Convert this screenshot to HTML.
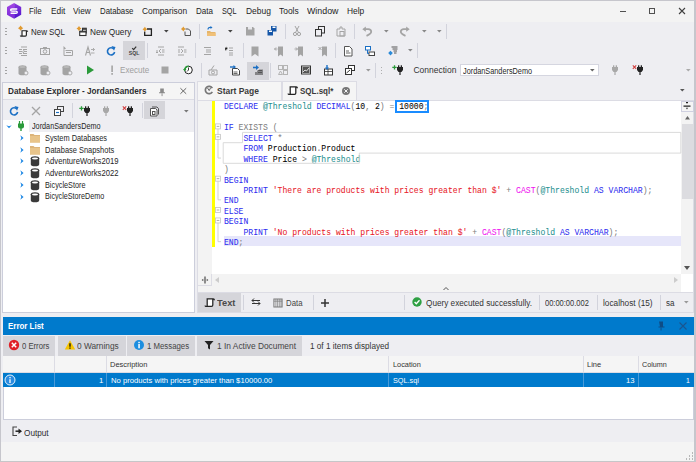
<!DOCTYPE html>
<html><head><meta charset="utf-8">
<style>
*{margin:0;padding:0;box-sizing:border-box}
html,body{width:696px;height:462px;overflow:hidden;background:#eeeef2;font-family:"Liberation Sans",sans-serif;font-size:8.5px;color:#1e1e1e}
.a{position:absolute}
.t{position:absolute;white-space:nowrap;line-height:10px;transform-origin:0 50%}
svg{position:absolute;overflow:visible}
.code{position:absolute;font-family:"Liberation Mono",monospace;font-size:8.8px;line-height:10.45px;white-space:pre;color:#000;transform:scaleX(0.922);transform-origin:0 0;-webkit-text-stroke:0.05px}
.k{color:#2e2ef0}.v{color:#1e9090}.s{color:#e8202a}.f{color:#f010f0}.g{color:#808080}
</style></head><body>

<div class="a" style="left:0px;top:0px;width:696px;height:462px;background:transparent;border:1px solid #c6c6cc;border-right-width:2px;border-bottom:none"></div>
<div class="a" style="left:0px;top:460.7px;width:696px;height:1.3px;background:#c6c6c8;"></div>
<div class="a" style="left:1px;top:1px;width:693px;height:21px;background:#f3f3f3;"></div>
<svg style="left:6.8px;top:2.9px" width="14.2" height="15.8" viewBox="0 0 14.2 15.8">
<defs><linearGradient id="lgL" x1="0" y1="0" x2="0" y2="1"><stop offset="0" stop-color="#a448e4"/><stop offset="1" stop-color="#7a28d8"/></linearGradient>
<linearGradient id="lgR" x1="0" y1="0" x2="0" y2="1"><stop offset="0" stop-color="#8a36dc"/><stop offset="1" stop-color="#4a10cc"/></linearGradient></defs>
<polygon points="7.1,0 14.2,4 14.2,11.8 7.1,15.8 7.1,0" fill="url(#lgR)"/>
<polygon points="7.1,0 0,4 0,11.8 7.1,15.8" fill="url(#lgL)"/>
<path d="M10.3,6 H5 Q3.6,6 3.6,7.1 Q3.6,8.2 5,8.2 H9 Q10.3,8.2 10.3,9.25 Q10.3,10.3 9,10.3 H3.6" stroke="#fff" stroke-width="1.35" fill="none"/>
</svg>
<div class="t" style="left:29.10px;top:6.29px;font-size:8.7px;color:#1e1e1e;transform:scaleX(0.913);">File</div>
<div class="t" style="left:50.60px;top:6.29px;font-size:8.7px;color:#1e1e1e;transform:scaleX(0.954);">Edit</div>
<div class="t" style="left:73.40px;top:6.29px;font-size:8.7px;color:#1e1e1e;transform:scaleX(0.947);">View</div>
<div class="t" style="left:100.30px;top:6.29px;font-size:8.7px;color:#1e1e1e;transform:scaleX(0.900);">Database</div>
<div class="t" style="left:142.40px;top:6.29px;font-size:8.7px;color:#1e1e1e;transform:scaleX(0.962);">Comparison</div>
<div class="t" style="left:196.30px;top:6.29px;font-size:8.7px;color:#1e1e1e;transform:scaleX(0.925);">Data</div>
<div class="t" style="left:222.20px;top:6.29px;font-size:8.7px;color:#1e1e1e;transform:scaleX(0.839);">SQL</div>
<div class="t" style="left:245.60px;top:6.29px;font-size:8.7px;color:#1e1e1e;transform:scaleX(0.975);">Debug</div>
<div class="t" style="left:279.30px;top:6.29px;font-size:8.7px;color:#1e1e1e;transform:scaleX(0.970);">Tools</div>
<div class="t" style="left:307.20px;top:6.29px;font-size:8.7px;color:#1e1e1e;transform:scaleX(1.018);">Window</div>
<div class="t" style="left:347.40px;top:6.29px;font-size:8.7px;color:#1e1e1e;transform:scaleX(0.967);">Help</div>
<div class="a" style="left:620px;top:11px;width:6.2px;height:1.1px;background:#505050;"></div>
<div class="a" style="left:649px;top:8px;width:6.2px;height:6.2px;background:transparent;border:1.1px solid #505050"></div>
<svg style="left:678.5px;top:8.2px" width="6" height="6"><path d="M0,0 L6,6 M6,0 L0,6" stroke="#404040" stroke-width="1.1"/></svg>
<div class="a" style="left:5.4px;top:27.6px;width:1.2px;height:1.2px;background:#999;border-radius:0.6px"></div>
<div class="a" style="left:5.4px;top:30.6px;width:1.2px;height:1.2px;background:#999;border-radius:0.6px"></div>
<div class="a" style="left:5.4px;top:33.6px;width:1.2px;height:1.2px;background:#999;border-radius:0.6px"></div>
<svg style="left:18.00px;top:26.00px" width="10" height="10" viewBox="0 0 10 10"><g transform="translate(2.3,3.6) scale(0.78)"><rect x="2.2" y="1.5" width="5.6" height="6.8" fill="#fff"/><path d="M2.2,8.3 V1.5 H8.2 Q9.4,1.5 9.4,2.9 M7.8,1.5 V7 Q7.8,8.3 6.5,8.3 H0.6 Q0.2,8.3 0.2,7.6" stroke="#222" stroke-width="1.5" fill="none"/></g><polygon points="5.20,2.20 3.74,3.34 2.60,4.80 1.46,3.34 0.00,2.20 1.46,1.06 2.60,-0.40 3.74,1.06" fill="#e09a30"/></svg>
<div class="t" style="left:31.10px;top:26.55px;font-size:8.5px;color:#1e1e1e;transform:scaleX(0.932);">New SQL</div>
<svg style="left:76.50px;top:26.00px" width="10" height="10" viewBox="0 0 10 10"><rect x="5.5" y="2.2" width="3.8" height="4.8" fill="#fff" stroke="#333" stroke-width="1"/><rect x="5.5" y="2.2" width="3.8" height="1.6" fill="#333"/><rect x="2.7" y="5.2" width="6.3" height="4.3" fill="#fff" stroke="#333" stroke-width="1.1"/><rect x="2.7" y="5.2" width="6.3" height="1.3" fill="#333"/><polygon points="4.50,2.50 3.10,3.60 2.00,5.00 0.90,3.60 -0.50,2.50 0.90,1.40 2.00,0.00 3.10,1.40" fill="#e09a30"/></svg>
<div class="t" style="left:89.60px;top:26.55px;font-size:8.5px;color:#1e1e1e;transform:scaleX(0.971);">New Query</div>
<svg style="left:142.00px;top:26.00px" width="10" height="10" viewBox="0 0 10 10"><path d="M5,3 H9.4 V9.3 H2.7 V5.5" fill="none" stroke="#222" stroke-width="1.3"/><polygon points="5.30,3.20 3.95,4.25 2.90,5.60 1.85,4.25 0.50,3.20 1.85,2.15 2.90,0.80 3.95,2.15" fill="#e09a30"/></svg>
<svg style="left:163.70px;top:29.73px" width="4.6" height="2.53"><polygon points="0,0 4.6,0 2.3,2.53" fill="#444"/></svg>
<svg style="left:180.50px;top:26.00px" width="10" height="10" viewBox="0 0 10 10"><path d="M4.5,3 H7.5 L9.5,5 V9.5 H4 V5.5" fill="none" stroke="#555" stroke-width="1"/><polygon points="4.70,3.00 3.35,4.05 2.30,5.40 1.25,4.05 -0.10,3.00 1.25,1.95 2.30,0.60 3.35,1.95" fill="#e09a30"/></svg>
<div class="a" style="left:198.5px;top:23.5px;width:1px;height:15.5px;background:#d2d3dc;"></div>
<svg style="left:206.00px;top:26.00px" width="10" height="10" viewBox="0 0 10 10"><path d="M1,5 h3 l1,1 h4.5 v4 h-8.5 z" fill="#e6b56a"/><path d="M1,7 h8.5 v3 h-8.5z" fill="#f0c078"/><path d="M2,3.5 Q2,1 5,1.5" stroke="#1a6fc4" stroke-width="1.2" fill="none"/><polygon points="4.5,0 6.5,1.6 4.5,3" fill="#1a6fc4"/></svg>
<svg style="left:227.70px;top:29.73px" width="4.6" height="2.53"><polygon points="0,0 4.6,0 2.3,2.53" fill="#444"/></svg>
<svg style="left:244.50px;top:26.00px" width="10" height="10" viewBox="0 0 10 10"><path d="M1,1 h7 l1.5,1.5 v7 h-8.5z" fill="#a4a4a4"/><rect x="3" y="1" width="4" height="2.5" fill="#e8e8ec"/></svg>
<svg style="left:267.00px;top:26.00px" width="10" height="10" viewBox="0 0 10 10"><path d="M4,0 h5.5 v5.5 h-5.5z" fill="#1556a8"/><path d="M0.5,4 h5.5 v5.5 h-5.5z" fill="#1556a8"/><rect x="5.5" y="0.5" width="3" height="1.5" fill="#fff"/><rect x="2" y="4.5" width="3" height="1.5" fill="#fff"/></svg>
<div class="a" style="left:284.5px;top:23.5px;width:1px;height:15.5px;background:#d2d3dc;"></div>
<svg style="left:292.00px;top:26.00px" width="10" height="10" viewBox="0 0 10 10"><path d="M3,0 L6.5,6.5 M7,0 L3.5,6.5" stroke="#a4a4a4" stroke-width="1"/><circle cx="3" cy="8" r="1.6" fill="none" stroke="#a4a4a4" stroke-width="1"/><circle cx="7" cy="8" r="1.6" fill="none" stroke="#a4a4a4" stroke-width="1"/></svg>
<svg style="left:314.50px;top:26.00px" width="10" height="10" viewBox="0 0 10 10"><rect x="3.5" y="0.5" width="6" height="6.5" fill="none" stroke="#333" stroke-width="1"/><rect x="0.5" y="3.5" width="6" height="6.5" fill="#eeeef2" stroke="#333" stroke-width="1"/></svg>
<svg style="left:336.00px;top:26.00px" width="10" height="10" viewBox="0 0 10 10"><path d="M1,3 h3 v-2 h2 v2 h3 v7 h-8z" fill="none" stroke="#a4a4a4" stroke-width="1"/><rect x="4" y="5.5" width="4" height="4.5" fill="none" stroke="#a4a4a4" stroke-width="1"/></svg>
<div class="a" style="left:354px;top:23.5px;width:1px;height:15.5px;background:#d2d3dc;"></div>
<svg style="left:362.00px;top:26.00px" width="10" height="10" viewBox="0 0 10 10"><path d="M3,3.2 H6.2 Q9.2,3.2 9.2,5.8 Q9.2,7.8 4.5,9.8" stroke="#a4a4a4" stroke-width="1.8" fill="none"/><polygon points="0.3,3.2 3.8,0.6 3.8,5.8" fill="#a4a4a4"/></svg>
<svg style="left:383.70px;top:29.73px" width="4.6" height="2.53"><polygon points="0,0 4.6,0 2.3,2.53" fill="#888"/></svg>
<svg style="left:400.00px;top:26.00px" width="10" height="10" viewBox="0 0 10 10"><path d="M7,3.2 H3.8 Q0.8,3.2 0.8,5.8 Q0.8,7.8 5.5,9.8" stroke="#a4a4a4" stroke-width="1.8" fill="none"/><polygon points="9.7,3.2 6.2,0.6 6.2,5.8" fill="#a4a4a4"/></svg>
<svg style="left:421.70px;top:29.73px" width="4.6" height="2.53"><polygon points="0,0 4.6,0 2.3,2.53" fill="#888"/></svg>
<svg style="left:436.70px;top:29.73px" width="4.6" height="2.53"><polygon points="0,0 4.6,0 2.3,2.53" fill="#888"/></svg>
<div class="a" style="left:446px;top:23.5px;width:1px;height:15.5px;background:#d2d3dc;"></div>
<div class="a" style="left:5.4px;top:47.1px;width:1.2px;height:1.2px;background:#999;border-radius:0.6px"></div>
<div class="a" style="left:5.4px;top:50.1px;width:1.2px;height:1.2px;background:#999;border-radius:0.6px"></div>
<div class="a" style="left:5.4px;top:53.1px;width:1.2px;height:1.2px;background:#999;border-radius:0.6px"></div>
<svg style="left:18.00px;top:45.50px" width="10" height="10" viewBox="0 0 10 10"><path d="M3,1 h6 M1,3.5 h3 M5,3.5 h4 M1,5.5 h3 M6,5.5 h3 M1,7.5 h3 M5,7.5 h4 M3,9.5 h6" stroke="#a4a4a4" stroke-width="1"/><path d="M6.5,4 L4.5,5.8 L6.5,7.5" stroke="#a4a4a4" fill="none"/></svg>
<svg style="left:40.00px;top:45.50px" width="10" height="10" viewBox="0 0 10 10"><rect x="0.5" y="2.5" width="9" height="6" fill="none" stroke="#a4a4a4" stroke-width="1"/><circle cx="5" cy="5.5" r="1.8" fill="none" stroke="#a4a4a4"/><rect x="3" y="1" width="4" height="1.5" fill="#a4a4a4"/></svg>
<svg style="left:63.00px;top:45.50px" width="10" height="10" viewBox="0 0 10 10"><polygon points="0.5,0 3,2.5 0.5,4" fill="#a4a4a4"/><path d="M1,4 v5.5 h8.5 v-5 h-7" fill="none" stroke="#a4a4a4" stroke-width="1"/><path d="M3,6.5 h5" stroke="#a4a4a4"/></svg>
<svg style="left:85.00px;top:45.50px" width="10" height="10" viewBox="0 0 10 10"><path d="M0.5,9.5 L3,1 L5.5,9.5 M1.5,6.5 h3" stroke="#a4a4a4" stroke-width="1.1" fill="none"/><path d="M6,3.5 h3.5 M8,2 l1.5,1.5 l-1.5,1.5 M6,7 h3.5" stroke="#a4a4a4" stroke-width="0.9" fill="none"/></svg>
<svg style="left:106.00px;top:45.50px" width="10" height="10" viewBox="0 0 10 10"><path d="M7.8,3 A3.6,3.6 0 1 0 8.6,6" stroke="#1a6fc4" stroke-width="1.6" fill="none"/><polygon points="5.5,0 9.5,1 8,4.8" fill="#1a6fc4"/></svg>
<div class="a" style="left:122.8px;top:41.2px;width:22.1px;height:18.6px;background:#d5d5da;"></div>
<svg style="left:129.00px;top:45.50px" width="10" height="10" viewBox="0 0 10 10"><path d="M3.2,2.2 L4.6,3.6 L7.2,0.6" stroke="#333" stroke-width="1.2" fill="none"/><text x="5" y="8.6" font-family="Liberation Sans" font-size="5.2" font-weight="bold" text-anchor="middle" fill="#444">SQL</text></svg>
<div class="a" style="left:147px;top:43px;width:1px;height:15px;background:#d2d3dc;"></div>
<svg style="left:155.00px;top:45.50px" width="10" height="10" viewBox="0 0 10 10"><path d="M3,1 h6 M3,9 h6 M1,5 h2 M7,4 h2.5 M7,6 h2.5 M1,6.5 h2" stroke="#a4a4a4" stroke-width="1"/><path d="M6,3 L4,5 L6,7" stroke="#a4a4a4" fill="none"/></svg>
<svg style="left:177.00px;top:45.50px" width="10" height="10" viewBox="0 0 10 10"><path d="M1,1 h6 M1,9 h6 M7,4 h2.5 M7,6 h2.5 M1,4 h2 M1,6 h2" stroke="#a4a4a4" stroke-width="1"/><path d="M4,3 L6,5 L4,7" stroke="#a4a4a4" fill="none"/></svg>
<div class="a" style="left:194.5px;top:43px;width:1px;height:15px;background:#d2d3dc;"></div>
<svg style="left:202.00px;top:45.50px" width="10" height="10" viewBox="0 0 10 10"><path d="M2,1.5 h7 M4,4 h5 M4,6 h5 M2,8.5 h7" stroke="#a4a4a4" stroke-width="1.1"/></svg>
<svg style="left:224.00px;top:45.50px" width="10" height="10" viewBox="0 0 10 10"><path d="M1,2 q1.5,-1.5 2.5,0 q0,1.5 -2,2.5 M5,2 h4 M5,4.5 h4 M5,7 h4 M5,9 h4" stroke="#a4a4a4" stroke-width="1"/></svg>
<div class="a" style="left:242.5px;top:43px;width:1px;height:15px;background:#d2d3dc;"></div>
<svg style="left:250.00px;top:45.50px" width="10" height="10" viewBox="0 0 10 10"><path d="M1.5,0.5 h7 v10 l-3.5,-2.5 l-3.5,2.5z" fill="#a4a4a4"/></svg>
<svg style="left:273.50px;top:45.50px" width="10" height="10" viewBox="0 0 10 10"><path d="M4,0.5 h5 v10 l-2.5,-2 l-2.5,2z" fill="#a4a4a4"/><path d="M0.5,3 h3 M2,1.5 L0.5,3 L2,4.5" stroke="#a4a4a4" stroke-width="1" fill="none"/></svg>
<svg style="left:294.00px;top:45.50px" width="10" height="10" viewBox="0 0 10 10"><path d="M4,0.5 h5 v10 l-2.5,-2 l-2.5,2z" fill="#a4a4a4"/><path d="M0.5,3 h3 M2,1.5 L3.5,3 L2,4.5" stroke="#a4a4a4" stroke-width="1" fill="none"/></svg>
<svg style="left:317.50px;top:45.50px" width="10" height="10" viewBox="0 0 10 10"><path d="M4,0.5 h5 v10 l-2.5,-2 l-2.5,2z" fill="#a4a4a4"/><path d="M0.5,1 L3.5,4 M0.5,4 L3.5,1" stroke="#a4a4a4" stroke-width="1"/></svg>
<div class="a" style="left:335px;top:43px;width:1px;height:15px;background:#d2d3dc;"></div>
<svg style="left:343.00px;top:45.50px" width="10" height="10" viewBox="0 0 10 10"><path d="M1.5,0.5 h5 l2.5,2.5 v7 h-7.5z" fill="#fff" stroke="#555" stroke-width="1"/><path d="M3,5 h3 M3,7 h4.5" stroke="#555" stroke-width="0.9"/></svg>
<svg style="left:365.00px;top:45.50px" width="10" height="10" viewBox="0 0 10 10"><rect x="0.5" y="0.5" width="5" height="3.5" fill="#fff" stroke="#1a6fc4" stroke-width="1"/><rect x="4" y="6" width="5.5" height="3.5" fill="#fff" stroke="#444" stroke-width="1"/><path d="M2.5,4 v3.5 h1.5" stroke="#1a6fc4" fill="none"/></svg>
<svg style="left:388.00px;top:45.50px" width="10" height="10" viewBox="0 0 10 10"><path d="M3.5,1 h6 M4.5,3 h5 M5.5,5 h3.5 M6,7 h2.5" stroke="#444" stroke-width="0.9"/><polygon points="2.5,4.8 4.8,7.1 2.5,9.4 0.2,7.1" fill="#2a8ad8"/></svg>
<svg style="left:407.70px;top:49.23px" width="4.6" height="2.53"><polygon points="0,0 4.6,0 2.3,2.53" fill="#888"/></svg>
<div class="a" style="left:417px;top:43px;width:1px;height:15px;background:#d2d3dc;"></div>
<div class="a" style="left:5.4px;top:66.6px;width:1.2px;height:1.2px;background:#999;border-radius:0.6px"></div>
<div class="a" style="left:5.4px;top:69.6px;width:1.2px;height:1.2px;background:#999;border-radius:0.6px"></div>
<div class="a" style="left:5.4px;top:72.6px;width:1.2px;height:1.2px;background:#999;border-radius:0.6px"></div>
<svg style="left:17.50px;top:65.00px" width="10" height="10" viewBox="0 0 10 10"><ellipse cx="4.5" cy="2" rx="4" ry="1.8" fill="#a4a4a4"/><path d="M0.5,2 v6.5 a4,1.8 0 0 0 8,0 v-6.5" fill="#a4a4a4"/><ellipse cx="4.5" cy="2" rx="3.2" ry="1.1" fill="#b8b8b8"/><circle cx="8" cy="8" r="2" fill="#eeeef2" stroke="#a4a4a4" stroke-width="0.9"/></svg>
<svg style="left:39.50px;top:65.00px" width="10" height="10" viewBox="0 0 10 10"><ellipse cx="4.5" cy="2" rx="4" ry="1.8" fill="#a4a4a4"/><path d="M0.5,2 v6.5 a4,1.8 0 0 0 8,0 v-6.5" fill="#a4a4a4"/><ellipse cx="4.5" cy="2" rx="3.2" ry="1.1" fill="#b8b8b8"/><circle cx="8" cy="8" r="2" fill="#eeeef2" stroke="#a4a4a4" stroke-width="0.9"/></svg>
<svg style="left:62.00px;top:65.00px" width="10" height="10" viewBox="0 0 10 10"><ellipse cx="4.5" cy="2" rx="4" ry="1.8" fill="#a4a4a4"/><path d="M0.5,2 v6.5 a4,1.8 0 0 0 8,0 v-6.5" fill="#a4a4a4"/><ellipse cx="4.5" cy="2" rx="3.2" ry="1.1" fill="#b8b8b8"/><circle cx="8" cy="8" r="2" fill="#eeeef2" stroke="#a4a4a4" stroke-width="0.9"/></svg>
<svg style="left:84.50px;top:65.00px" width="10" height="10" viewBox="0 0 10 10"><polygon points="2,0.5 9,5 2,9.5" fill="#2a9a3a"/></svg>
<svg style="left:106.50px;top:65.00px" width="10" height="10" viewBox="0 0 10 10"><rect x="4.3" y="0.5" width="1.6" height="6.5" fill="#a4a4a4"/><rect x="4.3" y="8" width="1.6" height="1.8" fill="#a4a4a4"/></svg>
<div class="t" style="left:120.10px;top:65.35px;font-size:8.5px;color:#a0a0a0;transform:scaleX(0.951);">Execute</div>
<svg style="left:160.00px;top:65.00px" width="10" height="10" viewBox="0 0 10 10"><rect x="1.5" y="1.5" width="7" height="7" fill="#a4a4a4"/></svg>
<svg style="left:182.50px;top:65.00px" width="10" height="10" viewBox="0 0 10 10"><circle cx="5.5" cy="5" r="3.8" fill="#fff" stroke="#222" stroke-width="1"/><path d="M5.5,2.5 v2.5 l-1.5,1.5" stroke="#222" stroke-width="0.9" fill="none"/><path d="M1.7,5 A3.8,3.8 0 0 1 5.5,1.2" stroke="#2a9a3a" stroke-width="1.6" fill="none"/><polygon points="0,4 3.5,4 1.7,6.5" fill="#2a9a3a"/></svg>
<div class="a" style="left:200.5px;top:62.5px;width:1px;height:15.5px;background:#d2d3dc;"></div>
<svg style="left:208.00px;top:65.00px" width="10" height="10" viewBox="0 0 10 10"><path d="M1,5 v5 h8 v-5 z M3,5 l3,-4.5" stroke="#a4a4a4" fill="none" stroke-width="1"/><circle cx="5" cy="7.5" r="1.5" fill="none" stroke="#a4a4a4"/></svg>
<svg style="left:230.00px;top:65.00px" width="10" height="10" viewBox="0 0 10 10"><path d="M2.5,3.5 h5 l2,2 v4.5 h-7z" fill="#fff" stroke="#444" stroke-width="1"/><path d="M3.5,7 h4 M3.5,8.5 h4" stroke="#444" stroke-width="0.8"/><path d="M0,2 h4" stroke="#1a6fc4" stroke-width="1.4"/><polygon points="3.5,0 6,2 3.5,4" fill="#1a6fc4"/></svg>
<div class="a" style="left:247px;top:61.5px;width:22px;height:18.5px;background:#d5d5da;"></div>
<svg style="left:253.00px;top:65.00px" width="10" height="10" viewBox="0 0 10 10"><path d="M3,10 v-3 M5,10 v-4.5 M7,10 v-5.5 M9,10 v-5.5" stroke="#333" stroke-width="1"/><path d="M5,5.5 h4 M5,7.5 h4" stroke="#333" stroke-width="0.6"/><path d="M0,2.5 h3.5" stroke="#1a6fc4" stroke-width="1.6"/><polygon points="3,0 6,2.5 3,5" fill="#1a6fc4"/></svg>
<div class="a" style="left:270px;top:62.5px;width:1px;height:15.5px;background:#d2d3dc;"></div>
<svg style="left:278.00px;top:65.00px" width="10" height="10" viewBox="0 0 10 10"><rect x="0.5" y="0.5" width="4" height="4" fill="none" stroke="#b4b4b4"/><rect x="5.5" y="0.5" width="4" height="4" fill="none" stroke="#b4b4b4"/><path d="M0.5,9.5 h4 l-2,-3.5z" fill="none" stroke="#b4b4b4"/><rect x="5.5" y="5.5" width="4" height="4" fill="none" stroke="#b4b4b4"/></svg>
<svg style="left:300.50px;top:65.00px" width="10" height="10" viewBox="0 0 10 10"><rect x="0.5" y="1" width="9" height="8" fill="#fff" stroke="#333" stroke-width="1"/><rect x="1.5" y="2" width="7" height="6" fill="#555"/><path d="M2,7 L4,5 L5.5,6 L8,3" stroke="#fff" stroke-width="0.8" fill="none"/></svg>
<svg style="left:323.00px;top:65.00px" width="10" height="10" viewBox="0 0 10 10"><rect x="1.5" y="4" width="8" height="6" fill="#fff" stroke="#333" stroke-width="1"/><path d="M1.5,6.5 h8 M5,4 v6" stroke="#333" stroke-width="0.8"/><path d="M4,0 v3" stroke="#1a6fc4" stroke-width="1.4"/><polygon points="2,2.5 6,2.5 4,5" fill="#1a6fc4"/></svg>
<svg style="left:345.00px;top:65.00px" width="10" height="10" viewBox="0 0 10 10"><rect x="3.5" y="0.5" width="6" height="5" fill="#fff" stroke="#333"/><rect x="0.5" y="3.5" width="6" height="6" fill="#fff" stroke="#333"/><path d="M1.5,8 L5,5" stroke="#333"/></svg>
<svg style="left:365.70px;top:68.73px" width="4.6" height="2.53"><polygon points="0,0 4.6,0 2.3,2.53" fill="#999"/></svg>
<div class="a" style="left:374.5px;top:62.5px;width:1px;height:15.5px;background:#d2d3dc;"></div>
<div class="a" style="left:380.9px;top:66.6px;width:1.2px;height:1.2px;background:#999;border-radius:0.6px"></div>
<div class="a" style="left:380.9px;top:69.6px;width:1.2px;height:1.2px;background:#999;border-radius:0.6px"></div>
<div class="a" style="left:380.9px;top:72.6px;width:1.2px;height:1.2px;background:#999;border-radius:0.6px"></div>
<svg style="left:391.90px;top:65.00px" width="10" height="10" viewBox="0 0 10 10"><rect x="6" y="0.3" width="1.3" height="2.2" fill="#222"/><rect x="8.7" y="0.3" width="1.3" height="2.2" fill="#222"/><path d="M5,2 h6 v3 l-1.5,2 h-3 l-1.5,-2z" fill="#222"/><rect x="7.4" y="6.5" width="1.2" height="3.5" fill="#222"/><path d="M0.3,2.4 h4.4 M2.5,0.2 v4.4" stroke="#2a9a3a" stroke-width="1.3"/></svg>
<div class="t" style="left:413.40px;top:65.35px;font-size:8.5px;color:#333;transform:scaleX(1.000);">Connection</div>
<div class="a" style="left:460px;top:64.3px;width:138.5px;height:11.7px;background:#fff;border:1px solid #d5d6e0"></div>
<div class="t" style="left:463.00px;top:65.62px;font-size:8.3px;color:#1e1e1e;transform:scaleX(0.881);">JordanSandersDemo</div>
<svg style="left:590.20px;top:68.73px" width="4.6" height="2.53"><polygon points="0,0 4.6,0 2.3,2.53" fill="#666"/></svg>
<svg style="left:609.50px;top:65.00px" width="10" height="10" viewBox="0 0 10 10"><rect x="3" y="0.3" width="1.3" height="2.2" fill="#a8a8a8"/><rect x="5.7" y="0.3" width="1.3" height="2.2" fill="#a8a8a8"/><path d="M2,2 h6 v3 l-1.5,2 h-3 l-1.5,-2z" fill="#a8a8a8"/><rect x="4.4" y="6.5" width="1.2" height="3.5" fill="#a8a8a8"/></svg>
<svg style="left:631.50px;top:65.00px" width="10" height="10" viewBox="0 0 10 10"><rect x="6" y="0.3" width="1.3" height="2.2" fill="#222"/><rect x="8.7" y="0.3" width="1.3" height="2.2" fill="#222"/><path d="M5,2 h6 v3 l-1.5,2 h-3 l-1.5,-2z" fill="#222"/><rect x="7.4" y="6.5" width="1.2" height="3.5" fill="#222"/><path d="M0.8,0.3 L4.2,3.8 M0.8,3.8 L4.2,0.3" stroke="#d04040" stroke-width="1.1"/></svg>
<svg style="left:685.70px;top:68.73px" width="4.6" height="2.53"><polygon points="0,0 4.6,0 2.3,2.53" fill="#aaa"/></svg>
<div class="a" style="left:2px;top:82px;width:193px;height:231px;background:#fff;border:1px solid #cccedb"></div>
<div class="a" style="left:3px;top:83px;width:191px;height:17px;background:#f5f5f5;border-bottom:1px solid #dcdce4"></div>
<div class="t" style="left:8.10px;top:86.19px;font-size:8.4px;color:#2d2d30;font-weight:bold;transform:scaleX(0.976);">Database Explorer - JordanSanders</div>
<svg style="left:156.50px;top:86.50px" width="10" height="10" viewBox="0 0 10 10"><path d="M3.2,1.5 h3.6 v3.8 h1.2 v1 h-6 v-1 h1.2z" fill="#8a8a8a"/><rect x="4.6" y="6.3" width="0.9" height="2.8" fill="#8a8a8a"/></svg>
<svg style="left:178.30px;top:86.00px" width="10" height="10" viewBox="0 0 10 10"><path d="M2.4,2.2 L8.2,7.8 M8.2,2.2 L2.4,7.8" stroke="#666" stroke-width="1"/></svg>
<div class="a" style="left:3px;top:100px;width:191px;height:20px;background:#eeeef2;"></div>
<svg style="left:9.00px;top:106.00px" width="10" height="10" viewBox="0 0 10 10"><path d="M7.8,3 A3.6,3.6 0 1 0 8.6,6" stroke="#1a6fc4" stroke-width="1.6" fill="none"/><polygon points="5.5,0 9.5,1 8,4.8" fill="#1a6fc4"/></svg>
<svg style="left:31.00px;top:106.00px" width="10" height="10" viewBox="0 0 10 10"><path d="M1,1 L9,9 M9,1 L1,9" stroke="#a4a4a4" stroke-width="1.3"/></svg>
<svg style="left:53.50px;top:106.00px" width="10" height="10" viewBox="0 0 10 10"><rect x="3.5" y="0.5" width="6" height="5" fill="none" stroke="#444"/><rect x="0.5" y="3.5" width="6" height="6" fill="#fff" stroke="#444"/><path d="M2,6.5 h3" stroke="#1a6fc4" stroke-width="1.2"/></svg>
<div class="a" style="left:71.5px;top:103px;width:1px;height:15px;background:#d2d3dc;"></div>
<svg style="left:79.00px;top:106.00px" width="10" height="10" viewBox="0 0 10 10"><rect x="6" y="0.3" width="1.3" height="2.2" fill="#222"/><rect x="8.7" y="0.3" width="1.3" height="2.2" fill="#222"/><path d="M5,2 h6 v3 l-1.5,2 h-3 l-1.5,-2z" fill="#222"/><rect x="7.4" y="6.5" width="1.2" height="3.5" fill="#222"/><path d="M0.3,2.4 h4.4 M2.5,0.2 v4.4" stroke="#2a9a3a" stroke-width="1.3"/></svg>
<svg style="left:101.00px;top:106.00px" width="10" height="10" viewBox="0 0 10 10"><rect x="3" y="0.3" width="1.3" height="2.2" fill="#a8a8a8"/><rect x="5.7" y="0.3" width="1.3" height="2.2" fill="#a8a8a8"/><path d="M2,2 h6 v3 l-1.5,2 h-3 l-1.5,-2z" fill="#a8a8a8"/><rect x="4.4" y="6.5" width="1.2" height="3.5" fill="#a8a8a8"/></svg>
<svg style="left:122.00px;top:106.00px" width="10" height="10" viewBox="0 0 10 10"><rect x="6" y="0.3" width="1.3" height="2.2" fill="#222"/><rect x="8.7" y="0.3" width="1.3" height="2.2" fill="#222"/><path d="M5,2 h6 v3 l-1.5,2 h-3 l-1.5,-2z" fill="#222"/><rect x="7.4" y="6.5" width="1.2" height="3.5" fill="#222"/><path d="M0.8,0.3 L4.2,3.8 M0.8,3.8 L4.2,0.3" stroke="#d04040" stroke-width="1.1"/></svg>
<div class="a" style="left:141.7px;top:103px;width:1px;height:15px;background:#d2d3dc;"></div>
<div class="a" style="left:143.5px;top:101px;width:21.5px;height:18px;background:#d5d5da;"></div>
<svg style="left:149.00px;top:106.00px" width="10" height="10" viewBox="0 0 10 10"><path d="M3,1 h5 l1.5,1.5 v6" fill="none" stroke="#555"/><path d="M1.5,2.5 h5 l1.5,1.5 v6 h-6.5z" fill="#fff" stroke="#555"/><rect x="3.5" y="5.5" width="2.5" height="3" fill="none" stroke="#555"/></svg>
<svg style="left:184.20px;top:109.73px" width="4.6" height="2.53"><polygon points="0,0 4.6,0 2.3,2.53" fill="#777"/></svg>
<div class="a" style="left:29px;top:119.5px;width:165px;height:12px;background:#eeeef2;"></div>
<svg style="left:5.50px;top:124.50px" width="6" height="4" viewBox="0 0 6 4"><polygon points="0.3,0.3 3,3.3 5.7,0.3 3,1.3" fill="#1e88e5"/></svg>
<svg style="left:16.00px;top:121.00px" width="10" height="10" viewBox="0 0 10 10"><path d="M3.5,0 v3 M6.5,0 v3" stroke="#2a9a3a" stroke-width="1.2"/><path d="M2,2.5 h6 v3 q0,2 -2,2 h-2 q-2,0 -2,-2z" fill="#2a9a3a"/><rect x="4.3" y="7" width="1.4" height="3" fill="#2a9a3a"/></svg>
<div class="t" style="left:31.60px;top:122.16px;font-size:8.2px;color:#1e1e1e;transform:scaleX(0.885);">JordanSandersDemo</div>
<svg style="left:19.80px;top:135.00px" width="4" height="6" viewBox="0 0 4 6"><polygon points="0.3,0.3 3.6,3 0.3,5.7 1.3,3" fill="#1e88e5"/></svg>
<svg style="left:30.00px;top:133.00px" width="10" height="10" viewBox="0 0 10 10"><path d="M0,1 h3.5 l1,1 h5.5 v7.5 h-10z" fill="#dcb47a"/><path d="M0,3 h10 v6.5 h-10z" fill="#e8c48a"/></svg>
<div class="t" style="left:44.60px;top:134.16px;font-size:8.2px;color:#1e1e1e;transform:scaleX(0.902);">System Databases</div>
<svg style="left:19.80px;top:146.70px" width="4" height="6" viewBox="0 0 4 6"><polygon points="0.3,0.3 3.6,3 0.3,5.7 1.3,3" fill="#1e88e5"/></svg>
<svg style="left:30.00px;top:144.70px" width="10" height="10" viewBox="0 0 10 10"><path d="M0,1 h3.5 l1,1 h5.5 v7.5 h-10z" fill="#dcb47a"/><path d="M0,3 h10 v6.5 h-10z" fill="#e8c48a"/></svg>
<div class="t" style="left:44.60px;top:145.81px;font-size:8.2px;color:#1e1e1e;transform:scaleX(0.910);">Database Snapshots</div>
<svg style="left:19.80px;top:158.40px" width="4" height="6" viewBox="0 0 4 6"><polygon points="0.3,0.3 3.6,3 0.3,5.7 1.3,3" fill="#1e88e5"/></svg>
<svg style="left:30.00px;top:156.40px" width="10" height="10" viewBox="0 0 10 10"><ellipse cx="5" cy="2.2" rx="4.2" ry="2" fill="#3a3a3a"/><path d="M0.8,2.2 v6 a4.2,2 0 0 0 8.4,0 v-6" fill="#3a3a3a"/><ellipse cx="5" cy="2.5" rx="3.1" ry="1.1" fill="#fff"/></svg>
<div class="t" style="left:44.60px;top:157.46px;font-size:8.2px;color:#1e1e1e;transform:scaleX(0.935);">AdventureWorks2019</div>
<svg style="left:19.80px;top:170.10px" width="4" height="6" viewBox="0 0 4 6"><polygon points="0.3,0.3 3.6,3 0.3,5.7 1.3,3" fill="#1e88e5"/></svg>
<svg style="left:30.00px;top:168.10px" width="10" height="10" viewBox="0 0 10 10"><ellipse cx="5" cy="2.2" rx="4.2" ry="2" fill="#3a3a3a"/><path d="M0.8,2.2 v6 a4.2,2 0 0 0 8.4,0 v-6" fill="#3a3a3a"/><ellipse cx="5" cy="2.5" rx="3.1" ry="1.1" fill="#fff"/></svg>
<div class="t" style="left:44.60px;top:169.11px;font-size:8.2px;color:#1e1e1e;transform:scaleX(0.935);">AdventureWorks2022</div>
<svg style="left:19.80px;top:181.80px" width="4" height="6" viewBox="0 0 4 6"><polygon points="0.3,0.3 3.6,3 0.3,5.7 1.3,3" fill="#1e88e5"/></svg>
<svg style="left:30.00px;top:179.80px" width="10" height="10" viewBox="0 0 10 10"><ellipse cx="5" cy="2.2" rx="4.2" ry="2" fill="#3a3a3a"/><path d="M0.8,2.2 v6 a4.2,2 0 0 0 8.4,0 v-6" fill="#3a3a3a"/><ellipse cx="5" cy="2.5" rx="3.1" ry="1.1" fill="#fff"/></svg>
<div class="t" style="left:44.60px;top:180.76px;font-size:8.2px;color:#1e1e1e;transform:scaleX(0.891);">BicycleStore</div>
<svg style="left:19.80px;top:193.50px" width="4" height="6" viewBox="0 0 4 6"><polygon points="0.3,0.3 3.6,3 0.3,5.7 1.3,3" fill="#1e88e5"/></svg>
<svg style="left:30.00px;top:191.50px" width="10" height="10" viewBox="0 0 10 10"><ellipse cx="5" cy="2.2" rx="4.2" ry="2" fill="#3a3a3a"/><path d="M0.8,2.2 v6 a4.2,2 0 0 0 8.4,0 v-6" fill="#3a3a3a"/><ellipse cx="5" cy="2.5" rx="3.1" ry="1.1" fill="#fff"/></svg>
<div class="t" style="left:44.60px;top:192.41px;font-size:8.2px;color:#1e1e1e;transform:scaleX(0.878);">BicycleStoreDemo</div>
<div class="a" style="left:197px;top:81px;width:85px;height:20px;background:#f5f5f5;border:1px solid #dcdce4;border-bottom:none"></div>
<div class="a" style="left:281.5px;top:81px;width:75px;height:20px;background:#f5f5f5;border:1px solid #dcdce4;border-bottom:none"></div>
<svg style="left:204.00px;top:85.40px" width="10" height="10" viewBox="0 0 10 10"><path d="M8.3,3.2 A3.7,3.7 0 1 0 8.3,6.8" stroke="#777" stroke-width="1.7" fill="none"/><path d="M3.5,3 L5.2,5.6 L6.6,2.8" stroke="#666" stroke-width="1" fill="none"/></svg>
<div class="t" style="left:216.70px;top:86.29px;font-size:8.4px;color:#3a3a3a;font-weight:bold;transform:scaleX(1.013);">Start Page</div>
<svg style="left:287.80px;top:85.60px" width="10" height="10" viewBox="0 0 10 10"><rect x="2.2" y="0.8" width="5.6" height="7.5" fill="#fff"/><path d="M2.2,8.3 V0.8 H8.2 Q9.4,0.8 9.4,2.2 M7.8,0.8 V7 Q7.8,8.3 6.5,8.3 H0.6 Q0.2,8.3 0.2,7.6" stroke="#222" stroke-width="1.25" fill="none"/></svg>
<div class="t" style="left:300.20px;top:86.29px;font-size:8.4px;color:#3a3a3a;font-weight:bold;transform:scaleX(0.954);">SQL.sql*</div>
<svg style="left:340.70px;top:86.00px" width="10" height="10" viewBox="0 0 10 10"><circle cx="5" cy="5" r="4" fill="#777"/><path d="M3.3,3.3 L6.7,6.7 M6.7,3.3 L3.3,6.7" stroke="#f5f5f5" stroke-width="1"/></svg>
<svg style="left:679.70px;top:88.73px" width="4.6" height="2.53"><polygon points="0,0 4.6,0 2.3,2.53" fill="#555"/></svg>
<div class="a" style="left:197px;top:100px;width:497px;height:192px;background:#fff;border:1px solid #dcdce4;border-bottom:none"></div>
<div class="a" style="left:198px;top:101px;width:14px;height:173px;background:#f3f3f3;"></div>
<div class="a" style="left:212px;top:100.5px;width:3px;height:146.3px;background:#ffff00;"></div>
<div class="a" style="left:224px;top:235.8px;width:457px;height:10.45px;background:#e6e6fa;"></div>
<div class="a" style="left:681px;top:101px;width:12px;height:173px;background:#f3f3f3;"></div>
<div class="a" style="left:681.2px;top:100.6px;width:12.4px;height:11px;background:#f5f5f5;border:1px solid #cfd0e0"></div>
<svg style="left:682.20px;top:101.00px" width="10" height="10" viewBox="0 0 10 10"><path d="M4,1.6 h2 M1.5,5.1 h7" stroke="#222" stroke-width="1.2"/><polygon points="3.8,6.8 6.2,6.8 5,8.6" fill="#444"/></svg>
<svg style="left:685.00px;top:116.05px" width="5" height="3.5" viewBox="0 0 5 3.5"><polygon points="0,3.5 2.5,0 5,3.5" fill="#666"/></svg>
<div class="a" style="left:681.5px;top:124px;width:12px;height:75px;background:#dcdce0;"></div>
<svg style="left:684.00px;top:266.00px" width="6" height="4" viewBox="0 0 6 4"><polygon points="0,0 6,0 3,4" fill="#555"/></svg>
<div class="a" style="left:198px;top:274px;width:483px;height:18px;background:#f3f3f3;"></div>
<div class="a" style="left:198px;top:274px;width:13.5px;height:12px;background:#f3f3f3;border-right:1px solid #dcdce4;border-bottom:1px solid #dcdce4"></div>
<svg style="left:199.90px;top:275.00px" width="10" height="10" viewBox="0 0 10 10"><path d="M5,1.5 v7" stroke="#555" stroke-width="1.3"/><polygon points="1.6,5 3.3,3.8 3.3,6.2" fill="#555"/><polygon points="8.4,5 6.7,3.8 6.7,6.2" fill="#555"/></svg>
<svg style="left:215.00px;top:277.00px" width="4" height="6" viewBox="0 0 4 6"><polygon points="4,0 4,6 0,3" fill="#ccc"/></svg>
<svg style="left:673.50px;top:277.00px" width="4" height="6" viewBox="0 0 4 6"><polygon points="0,0 0,6 4,3" fill="#ccc"/></svg>
<svg style="left:443.00px;top:287.00px" width="6" height="4" viewBox="0 0 6 4"><path d="M0.5,3 L3,0.5 L5.5,3" stroke="#555" fill="none"/></svg>
<div class="code" style="left:223.6px;top:102.4px"><span class="k">DECLARE</span> <span class="v">@Threshold</span> <span class="k">DECIMAL</span><span class="g">(</span>10<span class="g">,</span> 2<span class="g">) =</span> 10000<span class="g">;</span>

<span class="k">IF</span> <span class="g">EXISTS (</span>
    <span class="k">SELECT</span> <span class="g">*</span>
    <span class="k">FROM</span> Production<span class="g">.</span>Product
    <span class="k">WHERE</span> Price <span class="g">&gt;</span> <span class="v">@Threshold</span>
<span class="g">)</span>
<span class="k">BEGIN</span>
    <span class="k">PRINT</span> <span class="s">'There are products with prices greater than $'</span> <span class="g">+</span> <span class="f">CAST</span><span class="g">(</span><span class="v">@Threshold</span> <span class="k">AS</span> <span class="k">VARCHAR</span><span class="g">);</span>
<span class="k">END</span>
<span class="k">ELSE</span>
<span class="k">BEGIN</span>
    <span class="k">PRINT</span> <span class="s">'No products with prices greater than $'</span> <span class="g">+</span> <span class="f">CAST</span><span class="g">(</span><span class="v">@Threshold</span> <span class="k">AS</span> <span class="k">VARCHAR</span><span class="g">);</span>
<span class="k">END</span><span class="g">;</span></div>
<svg style="left:0;top:0" width="696" height="462"><path d="M218,128.90 V158.05 H221" stroke="#c8c8c8" stroke-width="0.8" fill="none"/><path d="M218,139.35 V138.19 H221" stroke="#c8c8c8" stroke-width="0.8" fill="none"/><path d="M218,181.15 V199.85 H221" stroke="#c8c8c8" stroke-width="0.8" fill="none"/><path d="M218,222.95 V241.65 H221" stroke="#c8c8c8" stroke-width="0.8" fill="none"/><rect x="215.5" y="123.90" width="5" height="5" fill="#fff" stroke="#c4c4c4" stroke-width="0.8"/><path d="M216.7,126.40 h2.6" stroke="#999" stroke-width="0.8"/><rect x="215.5" y="134.35" width="5" height="5" fill="#fff" stroke="#c4c4c4" stroke-width="0.8"/><path d="M216.7,136.85 h2.6" stroke="#999" stroke-width="0.8"/><rect x="215.5" y="176.15" width="5" height="5" fill="#fff" stroke="#c4c4c4" stroke-width="0.8"/><path d="M216.7,178.65 h2.6" stroke="#999" stroke-width="0.8"/><rect x="215.5" y="207.50" width="5" height="5" fill="#fff" stroke="#c4c4c4" stroke-width="0.8"/><path d="M216.7,210.00 h2.6" stroke="#999" stroke-width="0.8"/><rect x="215.5" y="217.95" width="5" height="5" fill="#fff" stroke="#c4c4c4" stroke-width="0.8"/><path d="M216.7,220.45 h2.6" stroke="#999" stroke-width="0.8"/><path d="M242.5,132.4 H680.8 V153.1 H359.3 V163.3 H223.2 V142.7 H242.5 Z" fill="none" stroke="#d6d6d6" stroke-width="0.9"/></svg>
<div class="a" style="left:395px;top:100.3px;width:34.1px;height:12.6px;background:transparent;border:2px solid #1a8cff"></div>
<div class="a" style="left:197px;top:292px;width:497px;height:21px;background:#eeeef2;border:1px solid #dcdce4;border-top:1px solid #dcdce4"></div>
<div class="a" style="left:198px;top:293px;width:43px;height:19px;background:#d5d5da;"></div>
<svg style="left:204.50px;top:297.50px" width="10" height="10" viewBox="0 0 10 10"><rect x="2.2" y="0.8" width="5.6" height="7.5" fill="#fff"/><path d="M2.2,8.3 V0.8 H8.2 Q9.4,0.8 9.4,2.2 M7.8,0.8 V7 Q7.8,8.3 6.5,8.3 H0.6 Q0.2,8.3 0.2,7.6" stroke="#222" stroke-width="1.25" fill="none"/></svg>
<div class="t" style="left:217.10px;top:298.35px;font-size:8.5px;color:#4a4a4a;font-weight:bold;transform:scaleX(1.092);">Text</div>
<div class="a" style="left:242.5px;top:295px;width:1px;height:15px;background:#d2d3dc;"></div>
<svg style="left:251.00px;top:297.00px" width="10" height="10" viewBox="0 0 10 10"><path d="M1,3.5 h8 M9,6.5 h-8" stroke="#333" stroke-width="1"/><path d="M3,1.5 L1,3.5 L3,5.5 M7,4.5 L9,6.5 L7,8.5" stroke="#333" fill="none"/></svg>
<svg style="left:272.70px;top:297.80px" width="10" height="10" viewBox="0 0 10 10"><rect x="0.9" y="1" width="8.2" height="8" fill="none" stroke="#7a7a7a" stroke-width="1"/><path d="M0.9,3.2 h8.2 M2.9,1 v8 M4.6,1 v8 M6.3,1 v8 M8,1 v8" stroke="#7a7a7a" stroke-width="0.7"/></svg>
<div class="t" style="left:286.10px;top:298.35px;font-size:8.5px;color:#444;transform:scaleX(0.919);">Data</div>
<div class="a" style="left:312.5px;top:295px;width:1px;height:15px;background:#d2d3dc;"></div>
<svg style="left:320.00px;top:298.00px" width="10" height="10" viewBox="0 0 10 10"><path d="M5,1 v8 M1,5 h8" stroke="#333" stroke-width="1.5"/></svg>
<div class="a" style="left:403.5px;top:295px;width:1px;height:15px;background:#d2d3dc;"></div>
<svg style="left:411.70px;top:297.00px" width="10" height="10" viewBox="0 0 10 10"><circle cx="5" cy="5" r="4.7" fill="#2ea043"/><path d="M2.6,5 L4.3,6.8 L7.5,3.2" stroke="#fff" stroke-width="1.3" fill="none"/></svg>
<div class="t" style="left:425.50px;top:297.75px;font-size:8.5px;color:#333;transform:scaleX(0.965);">Query executed successfully.</div>
<div class="a" style="left:538.5px;top:295px;width:1px;height:15px;background:#d2d3dc;"></div>
<div class="t" style="left:545.10px;top:297.75px;font-size:8.5px;color:#333;transform:scaleX(0.883);">00:00:00.002</div>
<div class="a" style="left:596.5px;top:295px;width:1px;height:15px;background:#d2d3dc;"></div>
<div class="t" style="left:603.00px;top:297.75px;font-size:8.5px;color:#333;transform:scaleX(0.972);">localhost (15)</div>
<div class="a" style="left:659.5px;top:295px;width:1px;height:15px;background:#d2d3dc;"></div>
<div class="t" style="left:665.60px;top:297.75px;font-size:8.5px;color:#333;transform:scaleX(0.947);">sa</div>
<svg style="left:683.70px;top:300.74px" width="4.6" height="2.53"><polygon points="0,0 4.6,0 2.3,2.53" fill="#999"/></svg>
<div class="a" style="left:3px;top:313px;width:691px;height:4px;background:#eeeef2;"></div>
<div class="a" style="left:3px;top:317px;width:691px;height:18px;background:#007acc;"></div>
<div class="t" style="left:8.30px;top:321.39px;font-size:8.4px;color:#fff;font-weight:bold;transform:scaleX(0.947);">Error List</div>
<svg style="left:656.00px;top:321.00px" width="10" height="10" viewBox="0 0 10 10"><path d="M3,0.5 h4 v5 h1.5 v1 h-6 v-1 h1.5z" fill="#0e4c86"/><rect x="4.6" y="6.5" width="0.9" height="3" fill="#0e4c86"/></svg>
<svg style="left:678.00px;top:321.00px" width="10" height="10" viewBox="0 0 10 10"><path d="M1.5,1.5 L8.5,8.5 M8.5,1.5 L1.5,8.5" stroke="#1a5690" stroke-width="1.1"/></svg>
<div class="a" style="left:3px;top:335px;width:691px;height:20.5px;background:#eeeef2;"></div>
<div class="a" style="left:3px;top:335.5px;width:52px;height:20px;background:#d5d5da;"></div>
<div class="a" style="left:57.5px;top:335.5px;width:68.0px;height:20px;background:#d5d5da;"></div>
<div class="a" style="left:127px;top:335.5px;width:67.5px;height:20px;background:#d5d5da;"></div>
<div class="a" style="left:197px;top:335.5px;width:105px;height:20px;background:#d5d5da;"></div>
<svg style="left:8.80px;top:340.30px" width="10" height="10" viewBox="0 0 10 10"><circle cx="5" cy="5" r="5.2" fill="#e02028"/><path d="M2.8,2.8 L7.2,7.2 M7.2,2.8 L2.8,7.2" stroke="#fff" stroke-width="1.5"/></svg>
<div class="t" style="left:22.00px;top:340.59px;font-size:8.4px;color:#444;transform:scaleX(0.917);">0 Errors</div>
<svg style="left:64.50px;top:340.00px" width="10" height="10" viewBox="0 0 10 10"><polygon points="5,0.2 10.2,9.6 -0.2,9.6" fill="#f6c400"/><path d="M5,3.2 L5,6.8" stroke="#000" stroke-width="1.2"/><rect x="4.4" y="7.5" width="1.2" height="1.2" fill="#000"/></svg>
<div class="t" style="left:77.20px;top:340.59px;font-size:8.4px;color:#444;transform:scaleX(0.991);">0 Warnings</div>
<svg style="left:134.00px;top:340.30px" width="10" height="10" viewBox="0 0 10 10"><circle cx="5" cy="5" r="5" fill="#1c8ee0"/><rect x="4.3" y="4" width="1.5" height="4.3" fill="#fff"/><rect x="4.3" y="1.8" width="1.5" height="1.4" fill="#fff"/></svg>
<div class="t" style="left:147.20px;top:340.59px;font-size:8.4px;color:#444;transform:scaleX(0.932);">1 Messages</div>
<svg style="left:203.60px;top:340.30px" width="10" height="10" viewBox="0 0 10 10"><path d="M0.5,1 h9 l-3.5,4 v4.5 l-2,-1.3 v-3.2z" fill="#222"/></svg>
<div class="t" style="left:217.40px;top:340.59px;font-size:8.4px;color:#444;transform:scaleX(0.998);">1 In Active Document</div>
<div class="t" style="left:310.00px;top:340.59px;font-size:8.4px;color:#333;transform:scaleX(0.977);">1 of 1 items displayed</div>
<div class="a" style="left:3px;top:355.5px;width:690.5px;height:17.5px;background:#f5f5f5;border-bottom:1px solid #dcdce4"></div>
<div class="a" style="left:54px;top:355.5px;width:1px;height:31.5px;background:#dcdce4;"></div>
<div class="a" style="left:106px;top:355.5px;width:1px;height:31.5px;background:#dcdce4;"></div>
<div class="a" style="left:388px;top:355.5px;width:1px;height:31.5px;background:#dcdce4;"></div>
<div class="a" style="left:583px;top:355.5px;width:1px;height:31.5px;background:#dcdce4;"></div>
<div class="a" style="left:637.5px;top:355.5px;width:1px;height:31.5px;background:#dcdce4;"></div>
<div class="t" style="left:110.30px;top:359.60px;font-size:7.8px;color:#333;transform:scaleX(0.959);">Description</div>
<div class="t" style="left:392.60px;top:359.60px;font-size:7.8px;color:#333;transform:scaleX(0.943);">Location</div>
<div class="t" style="left:587.30px;top:359.60px;font-size:7.8px;color:#333;transform:scaleX(0.956);">Line</div>
<div class="t" style="left:641.60px;top:359.60px;font-size:7.8px;color:#333;transform:scaleX(0.923);">Column</div>
<div class="a" style="left:3px;top:373px;width:690.5px;height:13.8px;background:#007acc;"></div>
<div class="a" style="left:54px;top:373px;width:1px;height:13.8px;background:#4a9ad8;"></div>
<div class="a" style="left:106px;top:373px;width:1px;height:13.8px;background:#4a9ad8;"></div>
<div class="a" style="left:388px;top:373px;width:1px;height:13.8px;background:#4a9ad8;"></div>
<div class="a" style="left:583px;top:373px;width:1px;height:13.8px;background:#4a9ad8;"></div>
<div class="a" style="left:637.5px;top:373px;width:1px;height:13.8px;background:#4a9ad8;"></div>
<svg style="left:4.60px;top:375.00px" width="10" height="10" viewBox="0 0 10 10"><circle cx="5" cy="5" r="5" fill="#2a8ce0" stroke="#fff" stroke-width="0.9"/><rect x="4.35" y="4.2" width="1.3" height="3.8" fill="#fff"/><rect x="4.35" y="2" width="1.3" height="1.3" fill="#fff"/></svg>
<div class="t" style="left:98.60px;top:375.50px;font-size:7.8px;color:#fff;transform:scaleX(0.991);">1</div>
<div class="t" style="left:111.10px;top:375.50px;font-size:7.8px;color:#fff;transform:scaleX(0.982);">No products with prices greater than $10000.00</div>
<div class="t" style="left:393.10px;top:375.50px;font-size:7.8px;color:#fff;transform:scaleX(0.933);">SQL.sql</div>
<div class="t" style="left:625.90px;top:375.50px;font-size:7.8px;color:#fff;transform:scaleX(0.980);">13</div>
<div class="t" style="left:686.40px;top:375.50px;font-size:7.8px;color:#fff;transform:scaleX(0.876);">1</div>
<div class="a" style="left:3px;top:386.8px;width:690.5px;height:33.5px;background:#fff;border:1px solid #cccedb;border-top:none"></div>
<svg style="left:11.50px;top:426.00px" width="10" height="10" viewBox="0 0 10 10"><path d="M5,1 h-4 v8.5 h4" stroke="#444" stroke-width="1.1" fill="none"/><path d="M3.5,5.2 h5" stroke="#222" stroke-width="1.5"/><polygon points="6.5,2.5 10,5.2 6.5,8" fill="#222"/></svg>
<div class="t" style="left:23.60px;top:429.46px;font-size:8.2px;color:#2d2d30;transform:scaleX(1.003);">Output</div>
<div class="a" style="left:1px;top:441.5px;width:693px;height:19.2px;background:#f4f4f4;"></div>
<div class="a" style="left:691.5px;top:452px;width:1.5px;height:1.5px;background:#b8b8b8;"></div>
<div class="a" style="left:688.5px;top:455px;width:1.5px;height:1.5px;background:#b8b8b8;"></div>
<div class="a" style="left:691.5px;top:455px;width:1.5px;height:1.5px;background:#b8b8b8;"></div>
<div class="a" style="left:685.5px;top:458px;width:1.5px;height:1.5px;background:#b8b8b8;"></div>
<div class="a" style="left:688.5px;top:458px;width:1.5px;height:1.5px;background:#b8b8b8;"></div>
<div class="a" style="left:691.5px;top:458px;width:1.5px;height:1.5px;background:#b8b8b8;"></div>
</body></html>
